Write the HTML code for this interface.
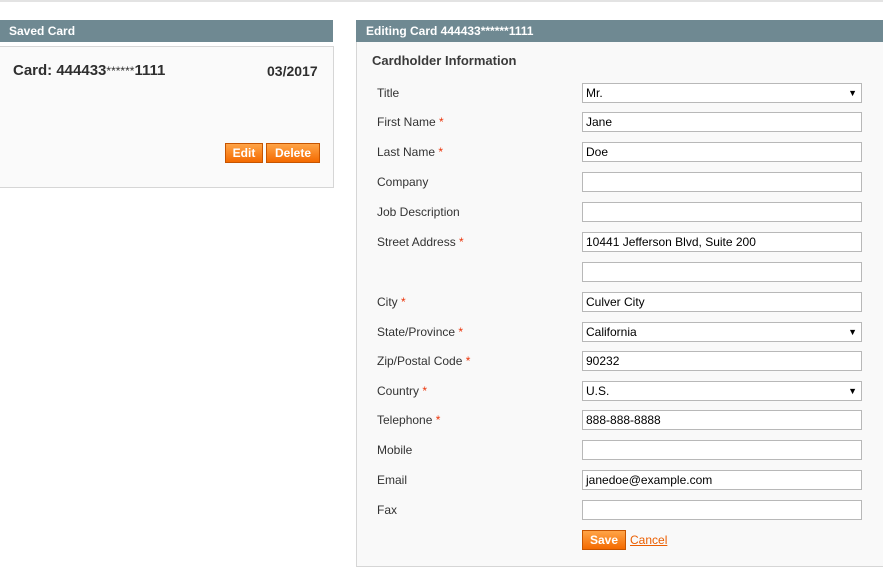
<!DOCTYPE html>
<html><head><style>
body{margin:0;width:883px;height:574px;background:#fff;font-family:"Liberation Sans",Arial,sans-serif;position:relative;overflow:hidden}
.a{position:absolute}
.hd{background:#6f8992;color:#fff;font-weight:bold;font-size:12px;line-height:22px;height:22px}
.lbl{position:absolute;left:377px;font-size:12px;color:#333;line-height:14px}
.lbl b{color:#eb340a;font-weight:normal}
.in{position:absolute;left:582px;width:275px;height:18px;border:1px solid #b8b8b8;background:#fff;font-size:12px;line-height:18px;padding-left:3px;box-sizing:content-box;color:#000}
.sel:after{content:"▼";position:absolute;right:4px;top:0;font-size:9px}
.btn{position:absolute;background:linear-gradient(#ffa447,#f46a00);border:1px solid #c65400;color:#fff;font-weight:bold;font-size:12px;text-align:center;line-height:18px;height:18px}
</style></head><body>
<div class="a" style="left:0;top:0;width:883px;height:2px;background:#e3e3e3"></div>
<div class="a hd" style="left:0;top:20px;width:333px;padding-left:9px;box-sizing:border-box">Saved Card</div>
<div class="a" style="left:-1px;top:46px;width:333px;height:140px;border:1px solid #d6d6d6;background:#fafafa"></div>
<div class="a" style="left:13px;top:62px;font-size:15px;font-weight:bold;color:#2f2f2f">Card: 444433<span style="font-weight:normal;font-size:12px">******</span>1111</div>
<div class="a" style="left:267px;top:63px;font-size:14px;font-weight:bold;color:#2f2f2f">03/2017</div>
<div class="btn" style="left:225px;top:143px;width:36px">Edit</div>
<div class="btn" style="left:266px;top:143px;width:52px">Delete</div>

<div class="a hd" style="left:356px;top:20px;width:527px;padding-left:10px;box-sizing:border-box">Editing Card 444433******1111</div>
<div class="a" style="left:356px;top:42px;width:540px;height:524px;border:1px solid #d6d6d6;border-top:none;background:#f9f9f9"></div>
<div class="a" style="left:372px;top:53px;font-size:13px;font-weight:bold;color:#3a3a3a">Cardholder Information</div>

<div class="lbl" style="top:86px">Title</div><div class="in sel" style="top:83px">Mr.</div>
<div class="lbl" style="top:115px">First Name <b>*</b></div><div class="in" style="top:112px">Jane</div>
<div class="lbl" style="top:145px">Last Name <b>*</b></div><div class="in" style="top:142px">Doe</div>
<div class="lbl" style="top:175px">Company</div><div class="in" style="top:172px"></div>
<div class="lbl" style="top:205px">Job Description</div><div class="in" style="top:202px"></div>
<div class="lbl" style="top:235px">Street Address <b>*</b></div><div class="in" style="top:232px">10441 Jefferson Blvd, Suite 200</div>
<div class="in" style="top:262px"></div>
<div class="lbl" style="top:295px">City <b>*</b></div><div class="in" style="top:292px">Culver City</div>
<div class="lbl" style="top:325px">State/Province <b>*</b></div><div class="in sel" style="top:322px">California</div>
<div class="lbl" style="top:354px">Zip/Postal Code <b>*</b></div><div class="in" style="top:351px">90232</div>
<div class="lbl" style="top:384px">Country <b>*</b></div><div class="in sel" style="top:381px">U.S.</div>
<div class="lbl" style="top:413px">Telephone <b>*</b></div><div class="in" style="top:410px">888-888-8888</div>
<div class="lbl" style="top:443px">Mobile</div><div class="in" style="top:440px"></div>
<div class="lbl" style="top:473px">Email</div><div class="in" style="top:470px">janedoe@example.com</div>
<div class="lbl" style="top:503px">Fax</div><div class="in" style="top:500px"></div>
<div class="btn" style="left:582px;top:530px;width:42px">Save</div>
<div class="a" style="left:630px;top:533px;font-size:12px;color:#eb5e00;text-decoration:underline">Cancel</div>
</body></html>
